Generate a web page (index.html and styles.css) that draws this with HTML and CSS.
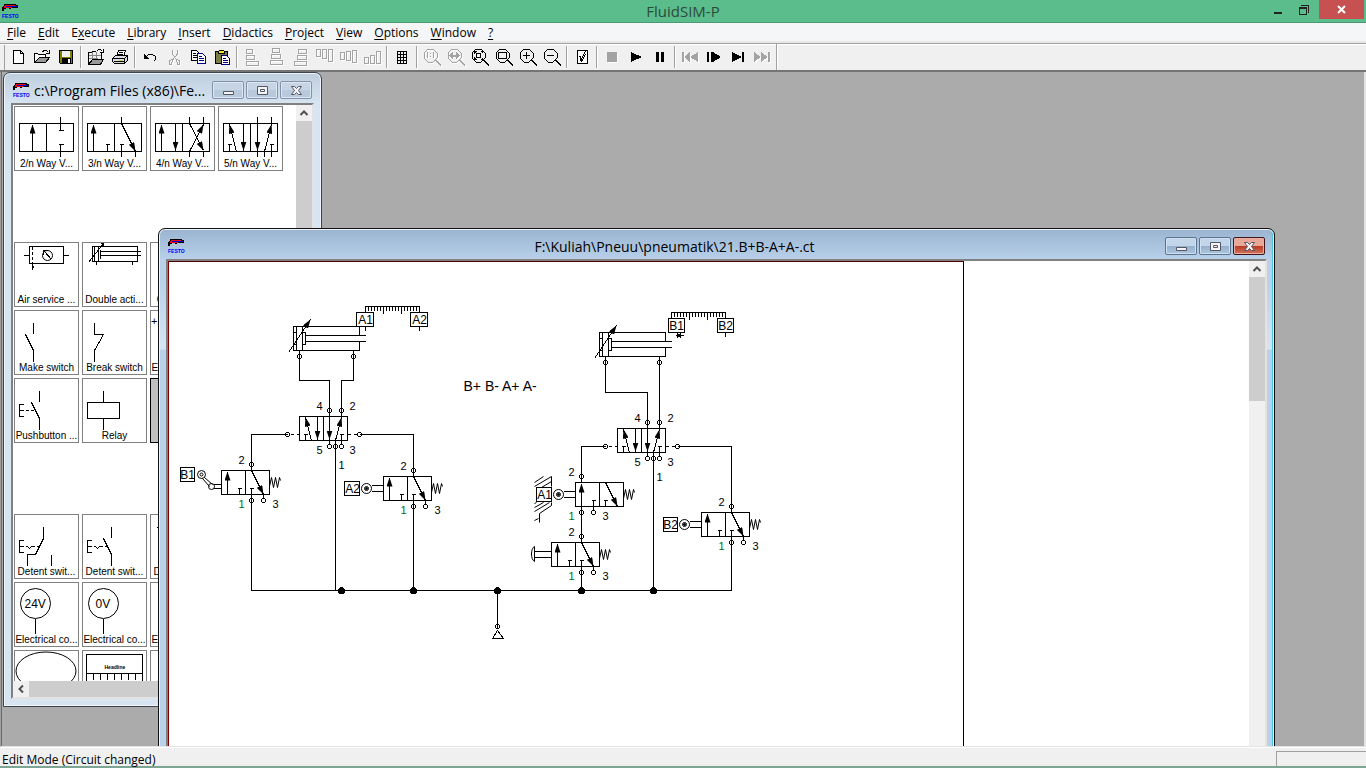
FILE: index.html
```html
<!DOCTYPE html>
<html lang="en">
<head>
    <meta charset="UTF-8">
    <meta name="viewport" content="width=device-width, initial-scale=1.0">
    <title>FluidSIM-P</title>
    <link rel="stylesheet" href="styles.css">
</head>
<body>
    <!-- Shared symbols -->
    <svg class="defs" aria-hidden="true">
        <defs>
            <marker id="head" viewBox="0 0 9 6" refX="9" refY="3" markerWidth="9" markerHeight="6" orient="auto" markerUnits="userSpaceOnUse">
                <path d="M0 0L9 3L0 6z"/>
            </marker>
            <symbol id="logo" viewBox="0 0 16 16" overflow="visible">
                <path d="M2 1h12v1h2v3H9v1H7V5H4v1H2v2H0V4h1V3h1z" fill="#000"/>
                <path d="M3 2h10v1H3zM2 3h2v2H2zM4 4h6v1H4z" fill="#f00010"/>
                <path d="M4 3h11v1H4z" fill="#0000d8"/>
                <text class="logo-text" x="0" y="15">FESTO</text>
            </symbol>
            <!-- 3/2 way valve body with spring -->
            <g id="valve32">
                <path d="M0 0H48V24H0zM24 0V24M18 24V18M16 18H20M30 24V18M28 18H32"/>
                <path d="M6 24V1" marker-end="url(#head)"/>
                <path d="M30 0L42 24" marker-end="url(#head)"/>
                <path class="soft" d="M48 16L50 7L52 17L54 7L56 17L58 7L59 10"/>
            </g>
            <g id="ports-rest">
                <path d="M42 24V28M30 -8V0M30 24V32"/>
                <circle cx="30" cy="-6" r="2"/><circle cx="30" cy="30" r="2"/><circle cx="42" cy="30" r="2"/>
            </g>
            <g id="roller">
                <path d="M5 -3H17M5 3H17"/>
                <circle class="soft" r="5"/><circle class="soft" r="2"/><circle class="soft dot" r="1"/>
            </g>
            <!-- 5/2 way pilot valve -->
            <g id="valve52">
                <path d="M0 0H48V24H0zM24 0V24M6 24V18M4 18H8M42 24V18M40 18H44M30 24V28M42 24V28M36 24V32"/>
                <path d="M12 24L6 1" marker-end="url(#head)"/>
                <path d="M18 0V23" marker-end="url(#head)"/>
                <path d="M30 0V23" marker-end="url(#head)"/>
                <path d="M36 24L42 1" marker-end="url(#head)"/>
                <path d="M0 18H-9M48 18H57" stroke-dasharray="3 3"/>
                <circle cx="-12" cy="18" r="2"/><circle cx="60" cy="18" r="2"/>
                <circle cx="30" cy="-6" r="2"/><circle cx="42" cy="-6" r="2"/>
                <circle cx="30" cy="30" r="2"/><circle cx="36" cy="30" r="2"/><circle cx="42" cy="30" r="2"/>
                <g class="num">
                    <text x="17" y="-7">4</text><text x="50" y="-7">2</text>
                    <text x="17" y="37">5</text><text x="50" y="37">3</text><text x="39" y="52">1</text>
                </g>
            </g>
            <!-- Double acting cylinder -->
            <g id="cylinder">
                <path d="M66 9V0H0V24H66V15M3 0V24M9 0V24M0 6H3M0 18H3M9 6H12V18H9M12 9H72M12 15H72M6 24V32M60 24V32"/>
                <path d="M-5 26L17 -7" marker-end="url(#head)"/>
                <circle cx="6" cy="30" r="2"/><circle cx="60" cy="30" r="2"/>
            </g>
            <g id="ruler">
                <path d="M0 6V0H54V6M3 0V4M6 0V4M9 0V4M12 0V4M15 0V4M18 0V7M21 0V4M24 0V4M27 0V4M30 0V4M33 0V4M36 0V7M39 0V4M42 0V4M45 0V4M48 0V4M51 0V4"/>
            </g>
            <symbol id="lens" viewBox="0 0 20 20">
                <path d="M6 2H11L15 6V11L11 15H6L2 11V6zM13 13L19 19M14 13L19 18" fill="none" stroke="currentColor"/>
            </symbol>
        </defs>
    </svg>

    <!-- Title bar -->
    <header class="titlebar">
        <svg class="logo" aria-hidden="true"><use href="#logo"/></svg>
        <h1>FluidSIM-P</h1>
        <div class="titlebar-controls">
            <button class="min" aria-label="Minimize"><svg viewBox="0 0 10 10"><path d="M1 7h8v2H1z"/></svg></button>
            <button class="max" aria-label="Restore"><svg viewBox="0 0 10 10"><path d="M0 2h8v8H0zM1 4v5h6V4zM2 0h8v8H9V1H2z" fill-rule="evenodd"/></svg></button>
            <button class="close" aria-label="Close"><svg viewBox="0 0 10 10"><path d="M1 1L8 8M8 1L1 8" stroke="#fff" stroke-width="2"/></svg></button>
        </div>
    </header>

    <!-- Menu -->
    <nav class="menu">
        <button><u>F</u>ile</button>
        <button><u>E</u>dit</button>
        <button>E<u>x</u>ecute</button>
        <button><u>L</u>ibrary</button>
        <button><u>I</u>nsert</button>
        <button><u>D</u>idactics</button>
        <button><u>P</u>roject</button>
        <button><u>V</u>iew</button>
        <button><u>O</u>ptions</button>
        <button><u>W</u>indow</button>
        <button><u>?</u></button>
    </nav>

    <!-- Toolbar -->
    <div class="toolbar" role="toolbar" aria-label="Tools">
        <button aria-label="New"><svg viewBox="0 0 20 20"><path d="M5.500 3.500H12.500L15.500 6.500V16.500H5.500zM12.500 3.500V6.500H15.500" fill="#fff" stroke="#000"/></svg></button>
        <button aria-label="Open"><svg viewBox="0 0 20 20"><path d="M2.500 15.500V6.500H5.500L6.500 7.500H13.500V10.500" fill="#fff" stroke="#000"/><path d="M2.500 15.500L7.500 10.500H17.500L13.500 15.500z" fill="#999" stroke="#000"/><path d="M10.500 4.500L12.500 3.500H14.500L16.500 5.500M14 6.500H17.500V3" fill="none" stroke="#000"/></svg></button>
        <button aria-label="Save"><svg viewBox="0 0 20 20"><path d="M3.500 3.500H16.500V16.500H4.500L3.500 15.500z" fill="#808000" stroke="#000"/><path d="M6 4H14V10H6z" fill="#efefef"/><path d="M6 11H15V17H6z" fill="#000"/><path d="M12 12h2v4h-2z" fill="#fff"/></svg></button>
        <span class="sep"></span>
        <button aria-label="Preview"><svg viewBox="0 0 20 20"><path d="M2.500 17.500V5.500H5.500L6.500 4.500H10M15.500 6V12" fill="none" stroke="#000"/><path d="M3 8.500H15M3 11.500H12M6.500 5V14M10.500 5V12" stroke="#888"/><path d="M2.500 17.500L6.500 12.500H17.500L14.500 17.500z" fill="#999" stroke="#000"/><path d="M10.500 4.500L12.500 2.500H14.500L16.500 4.500M14 5.500H17.500V2" fill="none" stroke="#000"/></svg></button>
        <button aria-label="Print"><svg viewBox="0 0 20 20"><path d="M6.500 9.500L8.500 3.500H15.500L13.500 9.500M9 5.500H13M8 7.500H13" fill="#fff" stroke="#000"/><path d="M2.500 11.500L5.500 8.500H17.500V13.500L14.500 16.500H4.500L2.500 14.500z" fill="#ddd" stroke="#000"/><path d="M3 11.500H14.500L17 9M14.500 12V16M4 14.500H14" stroke="#000" fill="none"/><path d="M9 13h3v1H9z" fill="#e8d800"/></svg></button>
        <span class="sep"></span>
        <button aria-label="Undo"><svg viewBox="0 0 20 20"><path d="M5.500 10.500L8.500 7.500H12.500L15.500 9.500V12.500L13.500 14.500" fill="none" stroke="#000"/><path d="M4 7V12H9z"/></svg></button>
        <button disabled aria-label="Cut"><svg viewBox="0 0 20 20"><path d="M8.500 3L8.500 7L12.500 13M13.500 3V7L8.500 13M8.500 12.500L7.500 17.500H5.500V13.500zM12.500 12.500L13.500 17.500H15.500V13.500z"/></svg></button>
        <button aria-label="Copy"><svg viewBox="0 0 20 20"><path d="M3.500 3.500H8.500L11.500 6.500V13.500H3.500z" fill="#fff" stroke="#000"/><path d="M5 6.500H8M5 8.500H10M5 10.500H10" stroke="#000"/><path d="M9.500 6.500H14.500L17.500 9.500V16.500H9.500z" fill="#fff" stroke="#000080"/><path d="M11 9.500H14M11 11.500H16M11 13.500H16" stroke="#000080"/></svg></button>
        <button aria-label="Paste"><svg viewBox="0 0 20 20"><path d="M3.500 4.500H15.500V16.500H3.500z" fill="#7c7c45" stroke="#000"/><path d="M6.500 6.500V4.500L8.500 3H10.500L12.500 4.500V6.500z" fill="#f2e22a" stroke="#000"/><path d="M9.500 8.500H14.500L17.500 11.500V17.500H9.500z" fill="#fff" stroke="#000080"/><path d="M11 11.500H14M11 13.500H16M11 15.500H16" stroke="#000080"/></svg></button>
        <span class="sep"></span>
        <button disabled aria-label="Align left"><svg viewBox="0 0 20 20"><path d="M4.500 2.500H10.500V6.500H4.500zM4.500 8.500H12.500V12.500H4.500zM4.500 14.500H16.500V18.500H4.500z"/></svg></button>
        <button disabled aria-label="Align centre"><svg viewBox="0 0 20 20"><path d="M6.500 1.500H13.500V5.500H6.500zM5.500 7.500H14.500V11.500H5.500zM4.500 13.500H16.500V17.500H4.500z"/></svg></button>
        <button disabled aria-label="Align right"><svg viewBox="0 0 20 20"><path d="M8.500 2.500H16.500V6.500H8.500zM7.500 8.500H16.500V12.500H7.500zM4.500 14.500H16.500V18.500H4.500z"/></svg></button>
        <button disabled aria-label="Align top"><svg viewBox="0 0 20 20"><path d="M2.500 2.500H6.500V9.500H2.500zM8.500 2.500H12.500V11.500H8.500zM14.500 2.500H18.500V14.500H14.500z"/></svg></button>
        <button disabled aria-label="Align middle"><svg viewBox="0 0 20 20"><path d="M2.500 5.500H6.500V12.500H2.500zM8.500 4.500H12.500V13.500H8.500zM14.500 3.500H18.500V15.500H14.500z"/></svg></button>
        <button disabled aria-label="Align bottom"><svg viewBox="0 0 20 20"><path d="M2.500 10.500H6.500V16.500H2.500zM8.500 8.500H12.500V16.500H8.500zM14.500 4.500H18.500V16.500H14.500z"/></svg></button>
        <span class="sep"></span>
        <button aria-label="Grid"><svg viewBox="0 0 20 20"><path d="M5.500 4.500H14.500V16.500H5.500zM8.500 4V17M11.500 4V17M5 7.500H15M5 10.500H15M5 13.500H15" fill="none" stroke="#000"/></svg></button>
        <span class="sep"></span>
        <button disabled aria-label="Actual size"><svg viewBox="0 0 20 20"><use href="#lens"/><path d="M5.500 5V11M11.500 5V11M8.500 6V7M8.500 9V10"/></svg></button>
        <button disabled aria-label="Previous view"><svg viewBox="0 0 20 20"><use href="#lens"/><path class="solid" d="M3 8.500L7 5V7.500H10V5L14 8.500L10 12V9.500H7V12z"/></svg></button>
        <button aria-label="Fit to window"><svg viewBox="0 0 20 20"><use href="#lens"/><path d="M6.500 6.500H10.500V10.500H6.500z" fill="none" stroke="#000"/><path d="M4 4h3L4 7zM13 4v3L10 4zM4 13v-3L7 13zM13 13h-3L13 10z"/></svg></button>
        <button aria-label="Zoom section"><svg viewBox="0 0 20 20"><use href="#lens"/><path d="M4.500 5.500H12.500V11.500H4.500z" fill="none" stroke="#000"/></svg></button>
        <button aria-label="Zoom in"><svg viewBox="0 0 20 20"><use href="#lens"/><path d="M5 8.500H12M8.500 5V12" stroke="#000"/></svg></button>
        <button aria-label="Zoom out"><svg viewBox="0 0 20 20"><use href="#lens"/><path d="M5 8.500H12" stroke="#000"/></svg></button>
        <span class="sep"></span>
        <button aria-label="Check"><svg viewBox="0 0 20 20"><path d="M5.500 3.500H15.500V16.500H5.500z" fill="#fff" stroke="#000"/><path d="M6.500 9.500H8.500V13.500L13.500 4.500M8.500 14.500H9.500L13.500 7" fill="none" stroke="#000"/></svg></button>
        <span class="sep"></span>
        <button disabled aria-label="Stop"><svg viewBox="0 0 20 20"><path class="solid" d="M5 5h10v10H5z"/></svg></button>
        <button aria-label="Start"><svg viewBox="0 0 20 20"><path d="M5 5L16 10L5 15z"/></svg></button>
        <button aria-label="Pause"><svg viewBox="0 0 20 20"><path d="M6 5h3v10H6zM11 5h3v10h-3z"/></svg></button>
        <span class="sep"></span>
        <button disabled aria-label="Reset"><svg viewBox="0 0 20 20"><path class="solid" d="M2 5h2v10H2zM10 5V15L4 10zM18 5V15L10 10z"/></svg></button>
        <button aria-label="Single step"><svg viewBox="0 0 20 20"><path d="M3 5h2v10H3zM7 5h2v10H7zM9 5L17 10L9 15z"/></svg></button>
        <button aria-label="Until state change"><svg viewBox="0 0 20 20"><path d="M4 5L14 10L4 15zM14 5h2v10h-2z"/></svg></button>
        <button disabled aria-label="Next topic"><svg viewBox="0 0 20 20"><path class="solid" d="M2 5L9 10L2 15zM9 5L16 10L9 15zM16 5h2v10h-2z"/></svg></button>
        <span class="sep end"></span>
    </div>

    <main class="desktop">
        <!-- Component library -->
        <section class="window library">
            <div class="caption">
                <svg class="logo" aria-hidden="true"><use href="#logo"/></svg>
                <h2>c:\Program Files (x86)\Fe...</h2>
                <div class="caption-controls">
                    <button aria-label="Minimize"><svg viewBox="0 0 13 11"><path d="M1.500 6.500H11.500V9.500H1.500z"/></svg></button>
                    <button aria-label="Maximize"><svg viewBox="0 0 13 11"><path d="M1.500 1.500H11.500V9.500H1.500zM4.500 4.500H8.500V6.500H4.500z"/></svg></button>
                    <button aria-label="Close"><svg viewBox="0 0 13 11"><path d="M1.500 1.500H4.500L6.500 3.500L8.500 1.500H11.500L8.500 5.500L11.500 9.500H8.500L6.500 7.500L4.500 9.500H1.500L4.500 5.500z"/></svg></button>
                </div>
            </div>
            <div class="client">
                <div class="tiles">
                    <figure><svg viewBox="0 0 63 51"><g transform="translate(.5 .5)"><path d="M4 16H58V44H4zM31 16V44M45 9V23M43 23H48M45 49V37M43 37H48"/><path d="M17 44V17" marker-end="url(#head)"/></g></svg><figcaption>2/n Way V...</figcaption></figure>
                    <figure><svg viewBox="0 0 63 51"><g transform="translate(.5 .5)"><path d="M4 16H58V44H4zM31 16V44M24 44V37M22 37H26M38 49V37M36 37H40M38 9V16M52 44V49"/><path d="M10 44V17" marker-end="url(#head)"/><path d="M38 16L52 44" marker-end="url(#head)"/></g></svg><figcaption>3/n Way V...</figcaption></figure>
                    <figure><svg viewBox="0 0 63 51"><g transform="translate(.5 .5)"><path d="M4 16H58V44H4zM31 16V44M38 9V16M52 9V16M38 44V49M52 44V49"/><path d="M10 44V17" marker-end="url(#head)"/><path d="M24 16V43" marker-end="url(#head)"/><path d="M38 16L52 43" marker-end="url(#head)"/><path d="M38 44L52 17" marker-end="url(#head)"/></g></svg><figcaption>4/n Way V...</figcaption></figure>
                    <figure><svg viewBox="0 0 63 51"><g transform="translate(.5 .5)"><path d="M4 16H58V44H4zM31 16V44M10 44V37M8 37H12M52 49V37M50 37H54M38 9V16M52 9V16M38 44V49M45 44V49"/><path d="M17 44L10 17" marker-end="url(#head)"/><path d="M24 16V43" marker-end="url(#head)"/><path d="M38 16V43" marker-end="url(#head)"/><path d="M45 44L52 17" marker-end="url(#head)"/></g></svg><figcaption>5/n Way V...</figcaption></figure>

                    <figure class="after-gap"><svg viewBox="0 0 63 51"><g transform="translate(.5 .5)"><path d="M14 3H48V20H14zM8 12H14M48 12H53M17 20V26M17 23L19 24"/><path d="M17 3V20" stroke-dasharray="3 2"/><circle class="soft" cx="32" cy="12" r="5"/><path d="M36 16L29 8M28 11V7H32"/></g></svg><figcaption>Air service ...</figcaption></figure>
                    <figure class="after-gap"><svg viewBox="0 0 63 51"><g transform="translate(.5 .5)"><path d="M9 3H54V18H9zM11 3V18M15 3V18M17 6V15M17 8H57M17 12H57M13 18V21M49 18V21"/><path d="M5 19L20 0M20 3V0H17"/></g></svg><figcaption>Double acti...</figcaption></figure>
                    <figure class="after-gap"><svg viewBox="0 0 63 51"></svg><figcaption>Configura...</figcaption></figure>
                    <figure class="after-gap"><svg viewBox="0 0 63 51"></svg><figcaption>Throttle ...</figcaption></figure>

                    <figure><svg viewBox="0 0 63 51"><g transform="translate(.5 .5)"><path d="M18 11V22M10 23L18 39V50"/></g></svg><figcaption>Make switch</figcaption></figure>
                    <figure><svg viewBox="0 0 63 51"><g transform="translate(.5 .5)"><path d="M11 11V23H20L11 39V50"/></g></svg><figcaption>Break switch</figcaption></figure>
                    <figure><svg viewBox="0 0 63 51"><text x="0" y="14" font-size="11">+24V</text></svg><figcaption>Electrical co...</figcaption></figure>
                    <figure><svg viewBox="0 0 63 51"></svg><figcaption>Valve sol...</figcaption></figure>

                    <figure><svg viewBox="0 0 63 51"><g transform="translate(.5 .5)"><path d="M24 11V22M16 23L24 39V50M8 25H4V37H8M4 31H8"/><path d="M10 31H20" stroke-dasharray="3 2"/></g></svg><figcaption>Pushbutton ...</figcaption></figure>
                    <figure><svg viewBox="0 0 63 51"><g transform="translate(.5 .5)"><path d="M4 23H36V39H4zM20 11V23M20 39V50"/></g></svg><figcaption>Relay</figcaption></figure>
                    <figure class="selected"><svg viewBox="0 0 63 51"></svg><figcaption></figcaption></figure>
                    <figure><svg viewBox="0 0 63 51"></svg><figcaption>Text</figcaption></figure>

                    <figure class="after-gap"><svg viewBox="0 0 63 51"><g transform="translate(.5 .5)"><path d="M28 11V23L20 39H12V50M36 39V50M8 25H4V37H8M4 31H8M10 31H12L14 33L16 31H19M21 31H24"/></g></svg><figcaption>Detent swit...</figcaption></figure>
                    <figure class="after-gap"><svg viewBox="0 0 63 51"><g transform="translate(.5 .5)"><path d="M28 11V22M20 23L28 39V50M8 25H4V37H8M4 31H8M10 31H12L14 33L16 31H19M21 31H24"/></g></svg><figcaption>Detent swit...</figcaption></figure>
                    <figure class="after-gap"><svg viewBox="0 0 63 51"><path d="M6 12.500H20"/></svg><figcaption>Detent swit...</figcaption></figure>
                    <figure class="after-gap"><svg viewBox="0 0 63 51"></svg><figcaption>Relay</figcaption></figure>

                    <figure><svg viewBox="0 0 63 51"><g transform="translate(.5 .5)"><circle class="soft" cx="20" cy="20" r="15"/><path d="M20 35V50"/><text x="9" y="24" font-size="12">24V</text></g></svg><figcaption>Electrical co...</figcaption></figure>
                    <figure><svg viewBox="0 0 63 51"><g transform="translate(.5 .5)"><circle class="soft" cx="20" cy="20" r="15"/><path d="M20 35V50"/><text x="12" y="24" font-size="12">0V</text></g></svg><figcaption>Electrical co...</figcaption></figure>
                    <figure><svg viewBox="0 0 63 51"></svg><figcaption>Electrical co...</figcaption></figure>
                    <figure><svg viewBox="0 0 63 51"></svg><figcaption>Lamp</figcaption></figure>

                    <figure><svg viewBox="0 0 63 51"><ellipse class="soft" cx="31" cy="20" rx="30" ry="19"/></svg><figcaption></figcaption></figure>
                    <figure><svg viewBox="0 0 63 51"><g transform="translate(.5 .5)"><path d="M3 3H59V22H3zM3 22V40M10 22V28M17 22V28M24 22V28M31 22V28M38 22V28M45 22V28M52 22V28M59 22V40"/><text x="21" y="17" font-size="5" font-weight="bold">Headline</text></g></svg><figcaption></figcaption></figure>
                    <figure><svg viewBox="0 0 63 51"><circle class="soft" cx="22" cy="40" r="18"/></svg><figcaption></figcaption></figure>
                    <figure><svg viewBox="0 0 63 51"></svg><figcaption></figcaption></figure>
                </div>
                <div class="scroll-v">
                    <button aria-label="Scroll up"><svg viewBox="0 0 16 16"><path d="M4.500 10L8 6.500L11.500 10"/></svg></button>
                    <div class="thumb"></div>
                </div>
                <div class="scroll-h">
                    <button aria-label="Scroll left"><svg viewBox="0 0 16 16"><path d="M10 4.500L6.500 8L10 11.500"/></svg></button>
                    <div class="thumb"></div>
                </div>
            </div>
        </section>

        <!-- Circuit window -->
        <section class="window circuit">
            <div class="caption">
                <svg class="logo" aria-hidden="true"><use href="#logo"/></svg>
                <h2>F:\Kuliah\Pneuu\pneumatik\21.B+B-A+A-.ct</h2>
                <div class="caption-controls">
                    <button aria-label="Minimize"><svg viewBox="0 0 13 11"><path d="M1.500 6.500H11.500V9.500H1.500z"/></svg></button>
                    <button aria-label="Maximize"><svg viewBox="0 0 13 11"><path d="M1.500 1.500H11.500V9.500H1.500zM4.500 4.500H8.500V6.500H4.500z"/></svg></button>
                    <button class="close" aria-label="Close"><svg viewBox="0 0 13 11"><path d="M1.500 1.500H4.500L6.500 3.500L8.500 1.500H11.500L8.500 5.500L11.500 9.500H8.500L6.500 7.500L4.500 9.500H1.500L4.500 5.500z"/></svg></button>
                </div>
            </div>
            <div class="client">
                <div class="sheet">
                    <svg class="diagram" viewBox="169 262 794 486" role="img" aria-label="Pneumatic circuit">
                        <g transform="translate(.5 .5)">
                            <!-- Lines -->
                            <path d="M299 356V380H329V416M353 356V380H341V416M287 434H251V470M359 434H413V476
                                     M251 494V590H731V536M335 440V590M413 500V590M497 590V628
                                     M605 362V392H647V428M659 362V428M605 446H581V482M677 446H731V512
                                     M653 452V590M581 506V542M581 566V590M497 630L492 638H503z"/>
                            <g class="dot">
                                <circle cx="341" cy="590" r="3"/><circle cx="413" cy="590" r="3"/><circle cx="497" cy="590" r="3"/>
                                <circle cx="581" cy="590" r="3"/><circle cx="653" cy="590" r="3"/>
                            </g>
                            <circle cx="497" cy="626" r="2"/>

                            <!-- Cylinders and rulers -->
                            <use href="#cylinder" x="293" y="326"/>
                            <use href="#cylinder" x="599" y="332"/>
                            <use href="#ruler" x="365" y="306"/>
                            <use href="#ruler" x="671" y="312"/>
                            <path d="M365 326V330M419 326V330M725 332V336M677 332V337M683 335H678M681 333L677 335L681 337"/>

                            <!-- Pilot valves -->
                            <use href="#valve52" x="299" y="416"/>
                            <use href="#valve52" x="617" y="428"/>

                            <!-- Limit valves -->
                            <use href="#valve32" x="221" y="470"/><use href="#ports-rest" x="221" y="470"/>
                            <use href="#valve32" x="383" y="476"/><use href="#ports-rest" x="383" y="476"/>
                            <use href="#valve32" x="701" y="512"/><use href="#ports-rest" x="701" y="512"/>
                            <use href="#valve32" x="551" y="542"/><use href="#ports-rest" x="551" y="542"/>
                            <use href="#valve32" x="575" y="482"/>
                            <path d="M593 506V510"/>
                            <circle cx="581" cy="476" r="2"/><circle cx="581" cy="512" r="2"/><circle cx="593" cy="512" r="2"/>
                            <use href="#roller" x="366" y="488"/>
                            <use href="#roller" x="684" y="524"/>
                            <use href="#roller" x="558" y="494"/>
                            <g class="soft">
                                <circle cx="201" cy="474" r="4"/><circle cx="201" cy="474" r="1.500"/>
                                <path d="M204 477L212 484M202 478L209 486"/><circle cx="211" cy="486" r="3"/>
                                <path d="M534 546C530 548 530 559 534 561z"/>
                            </g>
                            <path d="M213 484H221M213 488H221M534 551H551M534 557H551"/>
                            <path class="soft" d="M534 482L543 476M534 486L551 476M541 487L551 481M551 476V486M551 502V505L539 513V522M534 503L536 502M534 507L543 502M534 511L549 502M534 520L538 518"/>

                            <!-- Marks -->
                            <path class="box" d="M356 312H373V326H356zM410 312H427V326H410zM668 318H684V332H668zM717 318H733V332H717zM180 467H194V481H180zM344 481H359V495H344zM536 487H551V501H536zM663 517H677V531H663z"/>
                            <g class="mark">
                                <text x="365" y="323">A1</text><text x="419" y="323">A2</text>
                                <text x="676" y="329">B1</text><text x="725" y="329">B2</text>
                                <text x="187" y="478">B1</text><text x="352" y="492">A2</text>
                                <text x="544" y="498">A1</text><text x="670" y="528">B2</text>
                            </g>
                            <g class="num">
                                <text x="238" y="463">2</text><text class="p" x="238" y="507">1</text><text x="272" y="507">3</text>
                                <text x="400" y="469">2</text><text class="p" x="400" y="513">1</text><text x="434" y="513">3</text>
                                <text x="568" y="475">2</text><text class="p" x="568" y="519">1</text><text x="602" y="519">3</text>
                                <text x="568" y="535">2</text><text class="p" x="568" y="579">1</text><text x="602" y="579">3</text>
                                <text x="718" y="505">2</text><text class="p" x="718" y="549">1</text><text x="752" y="549">3</text>
                            </g>
                            <text class="sequence" x="463" y="390">B+ B- A+ A-</text>
                        </g>
                    </svg>
                </div>
                <div class="scroll-v">
                    <button aria-label="Scroll up"><svg viewBox="0 0 16 16"><path d="M4.500 10L8 6.500L11.500 10"/></svg></button>
                    <div class="thumb"></div>
                </div>
            </div>
        </section>
    </main>

    <footer class="status">
        <p>Edit Mode (Circuit changed)</p>
        <div class="status-panel"></div>
    </footer>
</body>
</html>
```
FILE: styles.css
```css
/* General Styles */
* {
    box-sizing: border-box;
}
body {
    margin: 0;
    height: 100vh;
    display: flex;
    flex-direction: column;
    overflow: hidden;
    font-family: "Open Sans", "Segoe UI", sans-serif;
    font-size: 12px;
    color: #000;
    background: #f0f0f0;
}
button {
    margin: 0;
    padding: 0;
    border: none;
    background: none;
    font: inherit;
    color: inherit;
}
h1, h2, p, figure {
    margin: 0;
    font-weight: normal;
}
svg {
    display: block;
}
text {
    font-family: "Liberation Sans", Arial, sans-serif;
    fill: #000;
    stroke: none;
}
marker path {
    fill: #000;
    stroke: none;
}
.defs {
    position: absolute;
    width: 0;
    height: 0;
}
.logo {
    width: 16px;
    height: 16px;
    flex: none;
    overflow: visible;
}
.logo-text {
    font-size: 5px;
    font-weight: bold;
    fill: #0000ff;
}

/* Title bar */
.titlebar {
    flex: none;
    height: 23px;
    display: grid;
    grid-template-columns: 1fr auto 1fr;
    background: #5bbd8b;
    border-bottom: 1px solid #4a9a74;
    color: #2c4a3c;
}
.titlebar .logo {
    margin: 3px 2px;
}
.titlebar h1 {
    font-size: 15px;
    line-height: 22px;
}
.titlebar-controls {
    display: flex;
    justify-content: flex-end;
    padding-right: 2px;
}
.titlebar-controls button {
    width: 26px;
    height: 19px;
    display: flex;
    align-items: center;
    justify-content: center;
}
.titlebar-controls svg {
    width: 10px;
    height: 10px;
    fill: #222;
}
.titlebar-controls .close {
    width: 45px;
    margin-left: 2px;
    background: #c75050;
}

/* Menu */
.menu {
    flex: none;
    height: 20px;
    display: flex;
    gap: 12px;
    padding-left: 7px;
    background: #f5f6f8;
    border-bottom: 2px solid #e8e8ea;
    line-height: 19px;
}
.menu u {
    text-underline-offset: 2px;
}

/* Toolbar */
.toolbar {
    flex: none;
    height: 29px;
    display: flex;
    align-items: center;
    padding-left: 6px;
    background: #f0f0f0;
    border-top: 1px solid #a0a0a0;
    border-bottom: 2px solid #757575;
    box-shadow: inset 0 1px #fff, inset 4px 0 #f0f0f0, inset 5px 0 #a0a0a0;
}
.toolbar button {
    width: 24px;
    height: 24px;
    display: flex;
    align-items: center;
    justify-content: center;
    color: #000;
}
.toolbar svg {
    width: 20px;
    height: 20px;
    shape-rendering: crispEdges;
}
.toolbar button:disabled {
    color: #a3a3a3;
    filter: drop-shadow(1px 1px #fff);
}
.toolbar button:disabled path {
    fill: none;
    stroke: #a3a3a3;
}
.toolbar button:disabled .solid {
    fill: #a3a3a3;
    stroke: none;
}
.sep {
    width: 6px;
    height: 22px;
    background: linear-gradient(90deg, transparent 2px, #a0a0a0 2px, #a0a0a0 3px, #fff 3px, #fff 4px, transparent 4px);
}
.sep.end {
    height: 26px;
}

/* Desktop */
.desktop {
    flex: 1;
    position: relative;
    overflow: hidden;
    background: #ababab;
    border-left: 1px solid #a0a0a0;
    border-right: 2px solid #e3e3e3;
    border-bottom: 1px solid #e3e3e3;
    box-shadow: inset 1px 0 #696969;
}
.window {
    position: absolute;
    display: flex;
    flex-direction: column;
    border: 1px solid #3c4450;
    border-radius: 7px 7px 0 0;
    box-shadow: inset 0 0 0 1px #eef4fa;
    padding: 0 7px;
}
.caption {
    flex: none;
    height: 30px;
    display: flex;
    align-items: center;
    gap: 5px;
    padding: 4px 2px 0;
}
.caption h2 {
    flex: 1;
    font-size: 14px;
    line-height: 22px;
    padding-top: 2px;
    white-space: nowrap;
    overflow: hidden;
}
.caption-controls {
    display: flex;
    gap: 2px;
}
.caption-controls button {
    width: 32px;
    height: 18px;
    display: flex;
    align-items: center;
    justify-content: center;
    border: 1px solid #8292a8;
    border-radius: 2px;
    background: linear-gradient(#c6d4e4 50%, #b9c9dc 50%);
    box-shadow: inset 0 0 0 1px #dde7f1;
}
.caption-controls svg {
    width: 13px;
    height: 11px;
    fill: #f4f4f4;
    stroke: #535666;
}

/* Client area */
.client {
    flex: 1;
    min-height: 0;
    display: grid;
    grid-template-columns: 1fr 16px;
    grid-template-rows: 1fr auto;
    overflow: hidden;
    background: #fff;
    border: 2px solid #e3e3e3;
    border-top-color: #808080;
    border-left-color: #808080;
}
.scroll-v, .scroll-h {
    background: #f0f0f0;
    display: flex;
}
.scroll-v {
    flex-direction: column;
}
.scroll-h {
    height: 16px;
    grid-column: 1 / 3;
}
.client .thumb {
    background: #cdcdcd;
    flex: none;
}
.client button {
    width: 16px;
    height: 16px;
}
.client button svg {
    width: 16px;
    height: 16px;
    fill: none;
    stroke: #505050;
    stroke-width: 2;
}

/* Library window */
.library {
    left: 2px;
    top: 0;
    width: 319px;
    height: 635px;
    padding-bottom: 7px;
    background: linear-gradient(#bfcedd, #d7e4f2 32px);
}
.library .scroll-v .thumb {
    height: 240px;
}
.library .scroll-h .thumb {
    width: 200px;
}
.tiles {
    display: grid;
    grid-template-columns: repeat(4, 65px);
    grid-auto-rows: min-content;
    gap: 3px;
    min-height: 0;
    padding-left: 1px;
    padding-top: 1px;
    overflow: hidden;
}
.tiles figure {
    height: 65px;
    border: 1px solid #808080;
    overflow: hidden;
}
.tiles .after-gap {
    margin-top: 68px;
}
.tiles .selected {
    background: #c0c0c0;
    border-color: #000;
}
.tiles svg {
    width: 63px;
    height: 51px;
    fill: none;
    stroke: #000;
    shape-rendering: crispEdges;
}
.tiles figcaption {
    font-family: "Liberation Sans", Arial, sans-serif;
    font-size: 10px;
    line-height: 12px;
    text-align: center;
    white-space: nowrap;
}

/* Circuit window */
.circuit {
    left: 157px;
    right: 89px;
    top: 156px;
    bottom: -2px;
    border-color: #111;
    background: linear-gradient(#9ab4d0, #b9d1ea 31px, #b9d1ea 50px, #d7e5f4 120px, #b9d1ea 121px);
    box-shadow: inset 0 0 0 1px #eef4fa, inset -2px 0 #4cc3e0;
}
.circuit h2 {
    text-align: center;
}
.circuit .caption-controls button {
    border-color: #5c7490;
    background: linear-gradient(#c2d5e9 50%, #96b0cc 50%, #adc6df);
    box-shadow: inset 0 0 0 1px #cfe0f0;
}
.circuit .caption-controls .close {
    border-color: #43141c;
    background: linear-gradient(#e9a798 50%, #b83a24 50%, #d4735c);
    box-shadow: inset 0 0 0 1px #e8b0a4;
}
.circuit .client {
    border-bottom: none;
}
.circuit .scroll-v .thumb {
    height: 124px;
}
.sheet {
    justify-self: start;
    border: 1px solid #000;
    border-left-color: #800000;
    border-top-color: #500000;
    border-bottom: none;
    overflow: hidden;
}
.diagram {
    width: 794px;
    height: 486px;
    fill: none;
    stroke: #000;
    shape-rendering: crispEdges;
}
.soft {
    shape-rendering: auto;
}
.dot {
    fill: #000;
}
.box {
    fill: #fff;
}
.num {
    font-size: 11px;
}
.p {
    fill: #007000;
}
.mark {
    font-size: 12px;
    text-anchor: middle;
}
.sequence {
    font-size: 14px;
}

/* Status bar */
.status {
    flex: none;
    height: 21px;
    display: flex;
    justify-content: space-between;
    padding-left: 2px;
    background: #f0f0f0;
    border-top: 1px solid #fff;
    border-bottom: 2px solid #7da594;
}
.status p {
    line-height: 24px;
    height: 18px;
}
.status-panel {
    width: 90px;
    margin-top: 3px;
    border-top: 1px solid #a0a0a0;
    border-left: 1px solid #a0a0a0;
}
```
